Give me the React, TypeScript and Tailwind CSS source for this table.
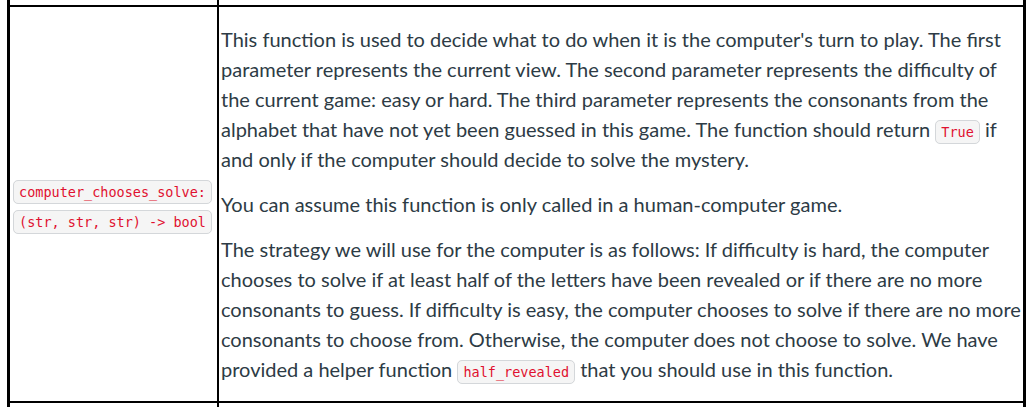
import React from "react"

// inline code chip, canvas style
function Code({ children }: { children: React.ReactNode }) {
  return (
    <code className="rounded-[5px] border border-[#d4d7da] bg-[#f5f5f5] px-[5px] py-[3px] font-['DejaVu_Sans_Mono',monospace] text-[13.5px] leading-none text-[#e0102f]">
      {children}
    </code>
  )
}

export default function App() {
  return (
    <div className="h-[407px] w-[1031px] overflow-hidden bg-white">
      <div className="ml-[7px] w-[1019px] border-x-[3px] border-black font-['Lato','Open_Sans',sans-serif] text-[20px] leading-[30px] text-[#2d3b45]">
        {/* stub of the row above */}
        <div className="grid h-[5px] grid-cols-[209px_1fr]">
          <div className="border-r-2 border-black" />
          <div />
        </div>

        <div className="grid grid-cols-[209px_1fr] border-y-2 border-black">
          <div className="flex items-center border-r-2 border-black py-[2px] pl-[3px]">
            <div className="leading-[30px]">
              <div><Code>computer_chooses_solve:</Code></div>
              <div><Code>(str, str, str) -&gt; bool</Code></div>
            </div>
          </div>
          <div className="py-[2px] pl-[2px] pr-0">
            <p className="my-[15px]">
              This function is used to decide what to do when it is the computer's turn to play. The first
              parameter represents the current view. The second parameter represents the difficulty of
              the current game: easy or hard. The third parameter represents the consonants from the
              alphabet that have not yet been guessed in this game. The function should return <Code>True</Code> if
              and only if the computer should decide to solve the mystery.
            </p>
            <p className="my-[15px]">You can assume this function is only called in a human-computer game.</p>
            <p className="my-[15px]">
              The strategy we will use for the computer is as follows: If difficulty is hard, the computer
              chooses to solve if at least half of the letters have been revealed or if there are no more
              consonants to guess. If difficulty is easy, the computer chooses to solve if there are no more
              consonants to choose from. Otherwise, the computer does not choose to solve. We have
              provided a helper function <Code>half_revealed</Code> that you should use in this function.
            </p>
          </div>
        </div>

        {/* stub of the row below */}
        <div className="grid h-[10px] grid-cols-[209px_1fr]">
          <div className="border-r-2 border-black" />
          <div />
        </div>
      </div>
    </div>
  )
}
